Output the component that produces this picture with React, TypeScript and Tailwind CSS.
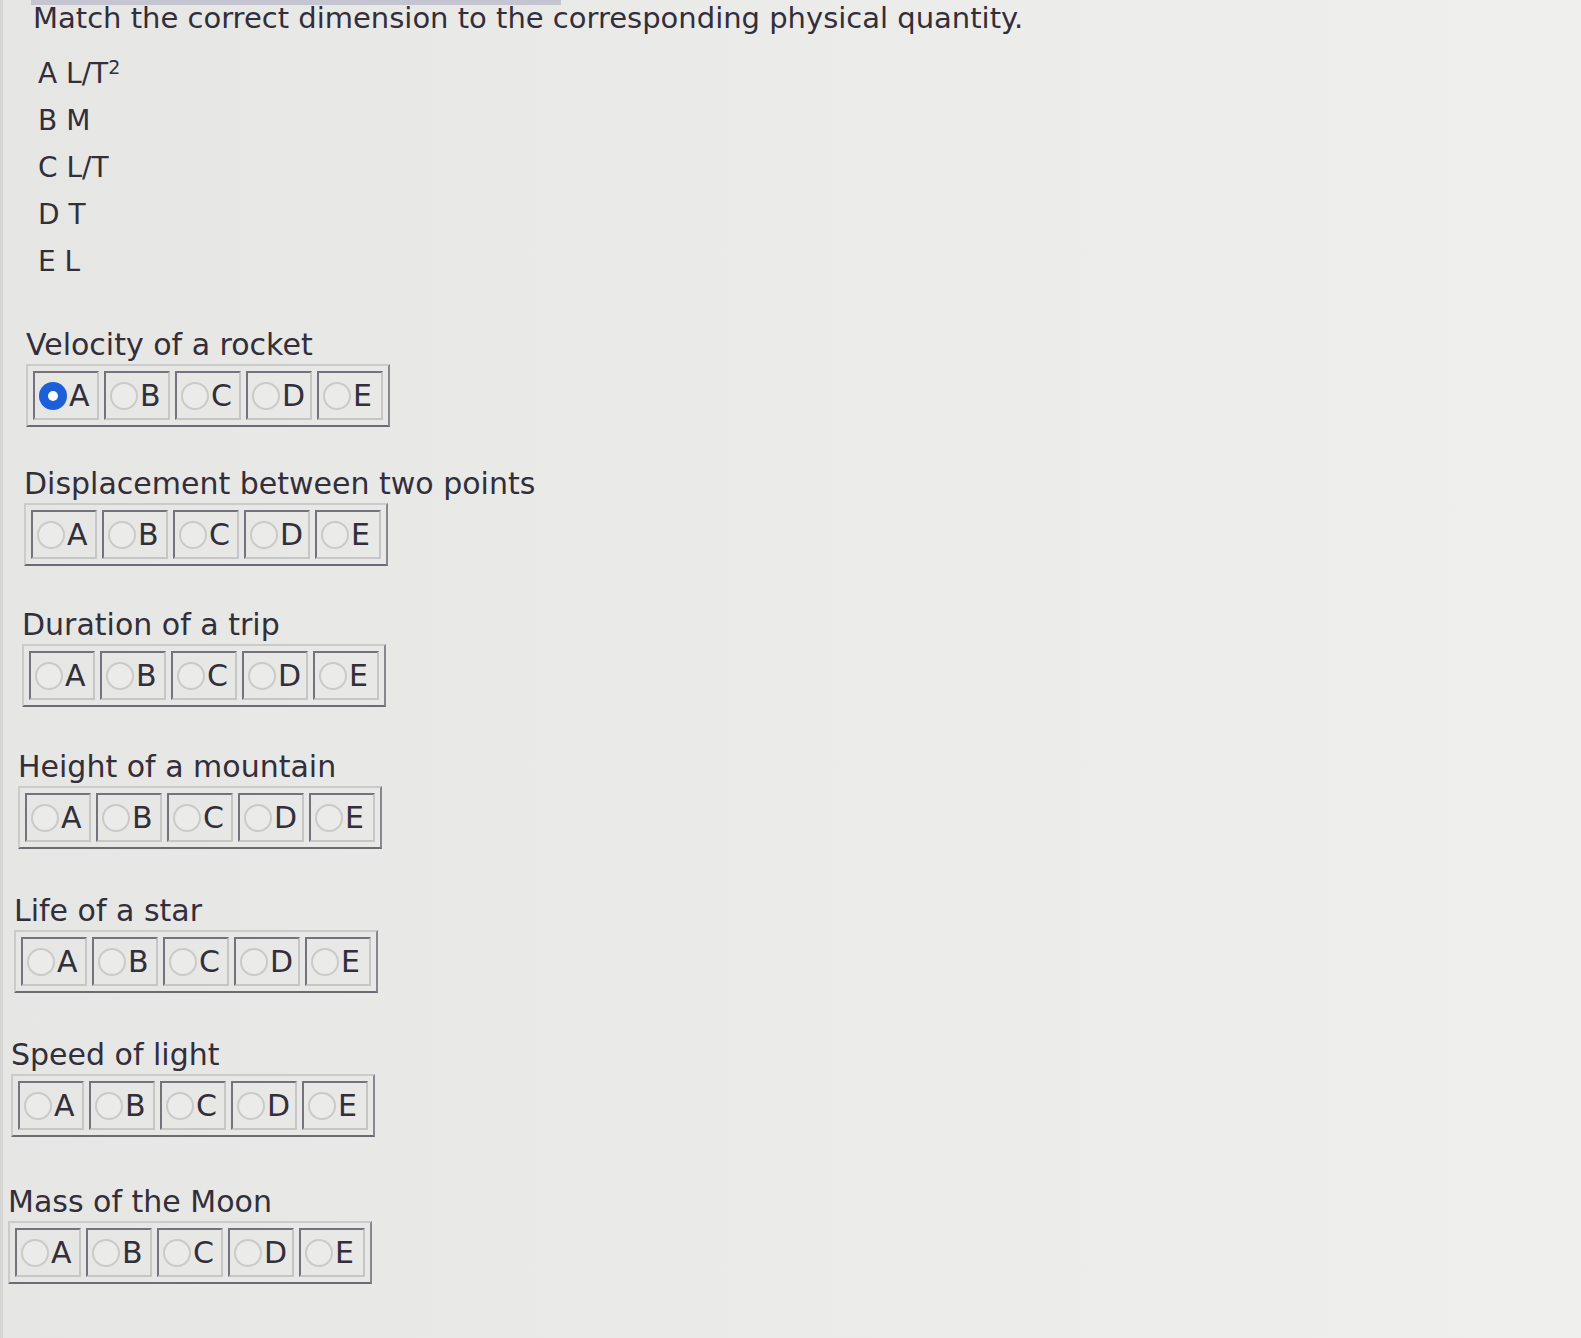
import React from 'react';

const letters = ['A', 'B', 'C', 'D', 'E'];

const key = [
  { l: 'A', v: 'L/T', sup: '2' },
  { l: 'B', v: 'M' },
  { l: 'C', v: 'L/T' },
  { l: 'D', v: 'T' },
  { l: 'E', v: 'L' },
];

// left shift per row mimics the slanted photo
const questions = [
  { label: 'Velocity of a rocket', checked: 'A', pl: 'pl-[23px]', mt: 'mt-[49px]' },
  { label: 'Displacement between two points', pl: 'pl-[21px]', mt: 'mt-[40px]' },
  { label: 'Duration of a trip', pl: 'pl-[19px]', mt: 'mt-[42px]' },
  { label: 'Height of a mountain', pl: 'pl-[15px]', mt: 'mt-[43px]' },
  { label: 'Life of a star', pl: 'pl-[11px]', mt: 'mt-[45px]' },
  { label: 'Speed of light', pl: 'pl-[8px]', mt: 'mt-[45px]' },
  { label: 'Mass of the Moon', pl: 'pl-[5px]', mt: 'mt-[48px]' },
];

const Radio: React.FC<{ on?: boolean }> = ({ on }) =>
  on ? (
    <span className="flex h-[28px] w-[28px] shrink-0 items-center justify-center rounded-full bg-[#1d5fd8]">
      <span className="h-[10px] w-[10px] rounded-full bg-white" />
    </span>
  ) : (
    <span className="h-[28px] w-[28px] shrink-0 rounded-full border-2 border-[#cacac8] bg-[#ebebe9]" />
  );

const Choice: React.FC<{ label: string; checked?: string; pl: string; mt: string }> = ({ label, checked, pl, mt }) => (
  <div className={`${pl} ${mt}`}>
    <div className="text-[30px] leading-[34px]">{label}</div>
    <div className="mt-[2px] inline-flex gap-[5px] border-2 border-t-[#cbcbcb] border-l-[#cbcbcb] border-b-[#6e6974] border-r-[#8a8690] p-[5px]">
      {letters.map((l) => (
        <div
          key={l}
          className="flex h-[49px] w-[66px] items-center gap-[2px] border-2 border-t-[#76717c] border-l-[#76717c] border-b-[#c6c6c6] border-r-[#c6c6c6] pl-[4px] text-[30px]"
        >
          <Radio on={checked === l} />
          <span className="leading-none">{l}</span>
        </div>
      ))}
    </div>
  </div>
);

export default function App() {
  return (
    <div
      className="min-h-screen border-l-[3px] border-[#d6d6d4] bg-gradient-to-r from-[#e6e6e4] via-[#ebebe9] to-[#efefed] pb-10 text-[#322e3a]"
      style={{ fontFamily: '"DejaVu Sans", Verdana, sans-serif' }}
    >
      <div className="ml-[28px] h-[5px] w-[530px] bg-[#c5c5d1]" />
      <div className="pl-[30px]">
        <div className="-mt-[2px] text-[29px] leading-[30px]">Match the correct dimension to the corresponding physical quantity.</div>
        <div className="mt-[24px] flex flex-col gap-[13px] pl-[5px]">
          {key.map((k) => (
            <div key={k.l} className="text-[28px] leading-[34px]">
              {k.l} {k.v}
              {k.sup && <sup className="text-[19px]">{k.sup}</sup>}
            </div>
          ))}
        </div>
      </div>
      {questions.map((q) => (
        <Choice key={q.label} {...q} />
      ))}
    </div>
  );
}
